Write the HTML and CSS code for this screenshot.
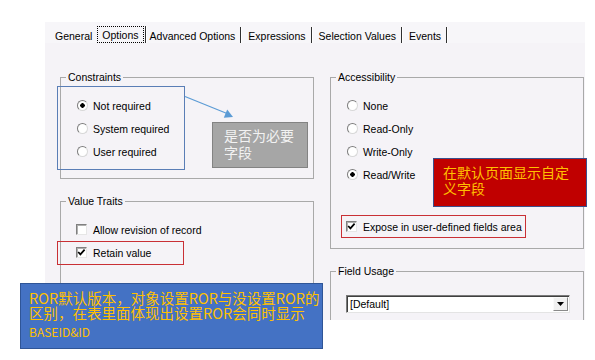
FILE: index.html
```html
<!DOCTYPE html>
<html>
<head>
<meta charset="utf-8">
<link rel="stylesheet" href="styles.css">
</head>
<body>
<div class="stage">
  <div class="panel">
    <div class="tabs">
      <span class="tab plain">General</span>
      <span class="tab active"><span class="focus">Options</span></span>
      <span class="tab after-active">Advanced Options</span>
      <span class="tab">Expressions</span>
      <span class="tab">Selection Values</span>
      <span class="tab">Events</span>
    </div>
    <div class="content">
      <div class="col">
        <fieldset class="group g-constraints">
          <legend>Constraints</legend>
          <div class="gbody">
            <div class="opt"><span class="radio on"></span>Not required</div>
            <div class="opt"><span class="radio"></span>System required</div>
            <div class="opt"><span class="radio"></span>User required</div>
          </div>
        </fieldset>
        <fieldset class="group g-traits">
          <legend>Value Traits</legend>
          <div class="gbody cb">
            <div class="opt"><span class="check"></span>Allow revision of record</div>
            <div class="opt"><span class="check on"><svg viewBox="0 0 11 11" width="11" height="11"><polyline points="2.2,5 4.4,7.4 8.6,2.6" fill="none" stroke="#000" stroke-width="1.7"/></svg></span>Retain value</div>
          </div>
        </fieldset>
      </div>
      <div class="col">
        <fieldset class="group g-access">
          <legend>Accessibility</legend>
          <div class="gbody">
            <div class="opt"><span class="radio"></span>None</div>
            <div class="opt"><span class="radio"></span>Read-Only</div>
            <div class="opt"><span class="radio"></span>Write-Only</div>
            <div class="opt"><span class="radio on"></span>Read/Write</div>
            <div class="opt cbrow expose"><span class="check on"><svg viewBox="0 0 11 11" width="11" height="11"><polyline points="2.2,5 4.4,7.4 8.6,2.6" fill="none" stroke="#000" stroke-width="1.7"/></svg></span>Expose in user-defined fields area</div>
          </div>
        </fieldset>
        <fieldset class="group g-usage">
          <legend>Field Usage</legend>
          <div class="gbody usage">
            <div class="select"><span class="sel-text">[Default]</span><span class="sel-btn"><svg viewBox="0 0 7 4" width="7" height="4"><polygon points="0,0 7,0 3.5,4" fill="#000"/></svg></span></div>
          </div>
        </fieldset>
      </div>
    </div>
  </div>

  <div class="hl-blue"></div>
  <svg class="arrow" width="60" height="30" viewBox="180 90 60 30">
    <line x1="185" y1="96.5" x2="227" y2="113.5" stroke="#5b9bd5" stroke-width="1.2"/>
    <polygon points="233,117 223.8,117.8 227.2,109.6" fill="#5b9bd5"/>
  </svg>
  <div class="note-gray">是否为必要<br>字段</div>
  <div class="note-red">在默认页面显示自定<br>义字段</div>
  <div class="hl-red hl-retain"></div>
  <div class="hl-red hl-expose"></div>
  <div class="note-blue">
    <div class="nb-line">ROR默认版本，对象设置ROR与没设置ROR的</div>
    <div class="nb-line">区别，在表里面体现出设置ROR会同时显示</div>
    <div class="nb-small">BASEID&amp;ID</div>
  </div>
</div>
</body>
</html>
```
FILE: styles.css
```css
* { box-sizing: border-box; }
html, body { margin: 0; padding: 0; background: #fff; }
.stage {
  position: relative;
  width: 595px;
  height: 360px;
  overflow: hidden;
  font-family: "Liberation Sans", Arial, sans-serif;
  font-size: 10.5px;
  color: #000;
}
.panel {
  margin: 22px 0 0 45px;
  width: 540px;
  height: 298px;
  background: #f5f3f7;
  overflow: hidden;
}
.tabs {
  height: 21px;
  display: flex;
  align-items: flex-end;
  padding-left: 10px;
  background: #f7f6f9;
}
.tab {
  height: 16px;
  display: flex;
  align-items: center;
  padding: 1px 5px 0 7px;
  border-right: 1px solid #303030;
  box-shadow: 1px 0 0 #ffffff;
  white-space: nowrap;
}
.tab.plain { border-right: none; box-shadow: none; padding: 1px 5px 0 0; }
.tab.after-active { padding-left: 4px; }
.tab.active { height: 17px; padding: 0 1px 0 0; }
.focus {
  display: flex;
  align-items: center;
  height: 17px;
  padding: 1px 4px 0;
  border: 1px dotted #000;
}
.content {
  display: flex;
  gap: 16px;
  padding: 27px 0 0 15px;
}
.col {
  width: 254px;
  display: flex;
  flex-direction: column;
  gap: 15px;
}
.group {
  margin: 0;
  padding: 0;
  border: 1px solid #a9a9a9;
  min-width: 0;
}
.group legend {
  margin-left: 5px;
  padding: 0 2px;
  line-height: 14px;
  font-size: 10.5px;
}
.g-constraints { height: 109px; }
.g-traits { height: 130px; }
.g-access { height: 179px; }
.g-usage { height: 80px; }
.gbody { padding: 10px 0 0 16px; }
.gbody.cb { padding-left: 15px; }
.gbody.usage { padding: 17px 0 0 15px; }
.opt {
  display: flex;
  align-items: center;
  gap: 5px;
  height: 23px;
  white-space: nowrap;
}
.cb .opt, .cbrow { gap: 6px; }
.expose { margin-top: 29px; margin-left: -1px; }
.radio {
  width: 11px;
  height: 11px;
  border-radius: 50%;
  border: 1px solid;
  border-color: #7d7d7d #d8d8d8 #d8d8d8 #7d7d7d;
  background: #fff;
  flex: none;
}
.radio.on {
  background: radial-gradient(circle, #000 0 2px, #fff 2.5px);
}
.check {
  width: 11px;
  height: 11px;
  border: 1px solid;
  border-color: #808080 #e6e6e6 #e6e6e6 #808080;
  background: #fff;
  box-shadow: inset 1px 1px 0 #b0b0b0;
  flex: none;
  display: flex;
  align-items: center;
  justify-content: center;
}
.check svg { display: block; flex: none; }
.select {
  width: 224px;
  height: 18px;
  background: #fff;
  border: 1px solid;
  border-color: #7a7a7a #e4e4e4 #e4e4e4 #7a7a7a;
  box-shadow: inset 1px 1px 0 #404040;
  display: flex;
  align-items: center;
  justify-content: space-between;
  padding: 0 1px 0 3px;
}
.sel-text { line-height: 14px; }
.sel-btn {
  width: 15px;
  height: 14px;
  background: #f0f0f0;
  border: 1px solid;
  border-color: #fafafa #8a8a8a #8a8a8a #fafafa;
  display: flex;
  align-items: center;
  justify-content: center;
}
.sel-btn svg { display: block; }

/* annotations overlaid on the dialog */
.hl-blue {
  position: absolute;
  left: 57px; top: 86px;
  width: 128px; height: 84px;
  border: 1px solid #5a7eb6;
}
.arrow { position: absolute; left: 180px; top: 90px; }
.note-gray {
  position: absolute;
  left: 212px; top: 122px;
  width: 96px; height: 46px;
  background: #a6a6a6;
  border: 1px solid #838383;
  color: #f2f2f2;
  font-family: "Noto Sans CJK SC", sans-serif;
  font-size: 14px;
  line-height: 17px;
  padding: 4px 0 0 11px;
}
.note-red {
  position: absolute;
  left: 433px; top: 158px;
  width: 154px; height: 49px;
  background: #c00000;
  border: 1px solid #3b4f8c;
  color: #ffc000;
  font-family: "Noto Sans CJK SC", sans-serif;
  font-size: 14px;
  line-height: 16px;
  padding: 5px 0 0 9px;
}
.hl-red { position: absolute; border: 1px solid #c93035; }
.hl-retain { left: 57px; top: 241px; width: 127px; height: 24px; }
.hl-expose { left: 341px; top: 215px; width: 185px; height: 23px; }
.note-blue {
  position: absolute;
  left: 20px; top: 283px;
  width: 303px; height: 66px;
  background: #4472c4;
  border: 1px solid #2f5597;
  color: #ffc000;
  font-family: "Noto Sans CJK SC", sans-serif;
  padding: 6px 0 0 8px;
  white-space: nowrap;
  overflow: hidden;
}
.nb-line { font-size: 14.5px; line-height: 15px; }
.nb-small { font-size: 12px; line-height: 14px; margin-top: 5px; }
```
